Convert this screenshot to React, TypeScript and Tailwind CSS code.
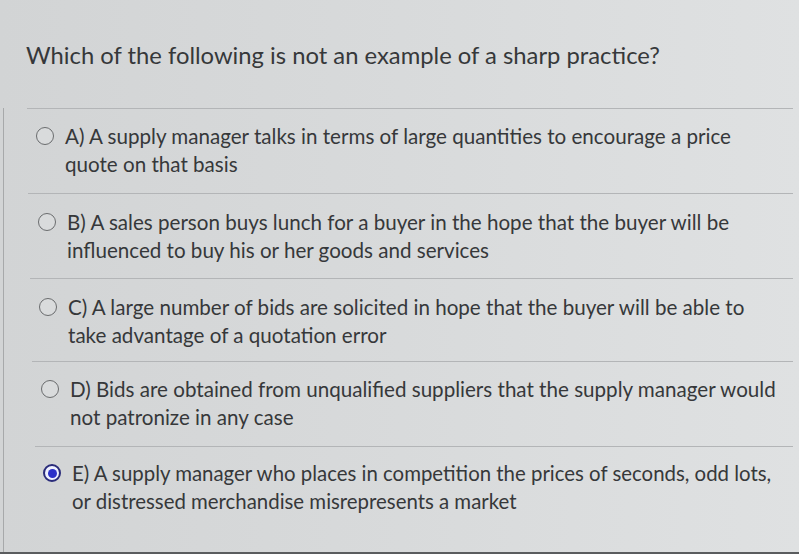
const options = [
  {
    key: "A",
    lines: [
      "A) A supply manager talks in terms of large quantities to encourage a price",
      "quote on that basis",
    ],
    pad: "pl-[32px] pt-[13px] pb-[15px]",
    sep: "ml-[23px]",
  },
  {
    key: "B",
    lines: [
      "B) A sales person buys lunch for a buyer in the hope that the buyer will be",
      "influenced to buy his or her goods and services",
    ],
    pad: "pl-[34px] pt-[14px] pb-[14px]",
    sep: "ml-[24px]",
  },
  {
    key: "C",
    lines: [
      "C) A large number of bids are solicited in hope that the buyer will be able to",
      "take advantage of a quotation error",
    ],
    pad: "pl-[35px] pt-[14px] pb-[12px]",
    sep: "ml-[26px]",
  },
  {
    key: "D",
    lines: [
      "D) Bids are obtained from unqualified suppliers that the supply manager would",
      "not patronize in any case",
    ],
    pad: "pl-[37px] pt-[13px] pb-[15px]",
    sep: "ml-[28px]",
  },
  {
    key: "E",
    lines: [
      "E) A supply manager who places in competition the prices of seconds, odd lots,",
      "or distressed merchandise misrepresents a market",
    ],
    pad: "pl-[39px] pt-[12px] pb-[12px]",
    sep: "ml-[31px]",
    checked: true,
  },
];

function Radio({ checked }: { checked?: boolean }) {
  if (checked) {
    return (
      <span className="mt-[5px] flex h-[18px] w-[18px] shrink-0 items-center justify-center rounded-full border-2 border-[#2a2c7a] bg-[#eef0ff]">
        <span className="h-[9px] w-[9px] rounded-full bg-[#2b30c9]" />
      </span>
    );
  }
  return (
    <span className="mt-[5px] h-[18px] w-[18px] shrink-0 rounded-full border-[1.5px] border-[#6a6c6e] bg-[#d9dbdc]" />
  );
}

export default function App() {
  return (
    <div
      className="relative h-[554px] w-[799px] overflow-hidden bg-gradient-to-r from-[#d2d4d5] via-[#d8dadb] to-[#dfe1e2] text-[#36383a]"
      style={{ fontFamily: "Lato, 'Open Sans', sans-serif" }}
    >
      <div className="flex h-full flex-col border-b-2 border-[#5a5c5e]">
        {/* Question */}
        <h1 className="pl-[26px] pt-[40px] text-[23.8px] leading-[30px] font-normal">
          Which of the following is not an example of a sharp practice?
        </h1>

        <div className="mt-[38px] ml-[3px] flex flex-1 flex-col border-l-[1.5px] border-[#8a8c8e]/60">
          {options.map((o) => (
            <div key={o.key}>
              <div className={`${o.sep} mr-[6px] h-px bg-[#b3b5b7]`} />
              <div className={`flex gap-[11px] ${o.pad}`}>
                <Radio checked={o.checked} />
                <div
                  className={`${o.checked ? "text-[20.4px]" : "text-[20.6px]"} leading-[28px] whitespace-nowrap`}
                >
                  {o.lines.map((l) => (
                    <div key={l}>{l}</div>
                  ))}
                </div>
              </div>
            </div>
          ))}
        </div>
      </div>
    </div>
  );
}
